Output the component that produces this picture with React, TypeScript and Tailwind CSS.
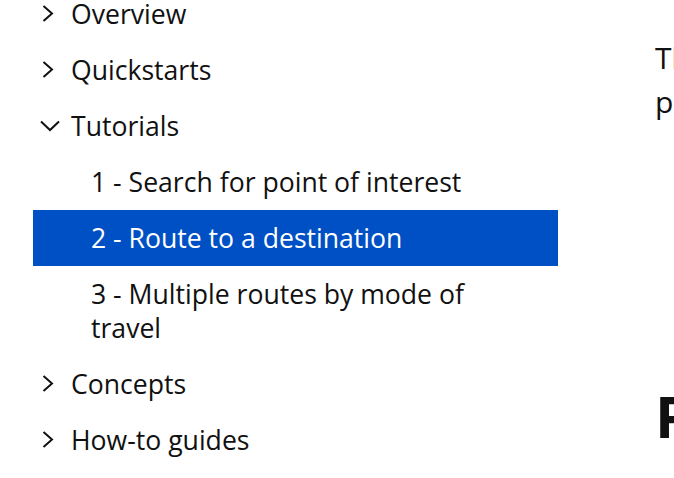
type NavItem = {
  label: string;
  expanded?: boolean;
  children?: { label: string; active?: boolean }[];
};

const nav: NavItem[] = [
  { label: 'Overview' },
  { label: 'Quickstarts' },
  {
    label: 'Tutorials',
    expanded: true,
    children: [
      { label: '1 - Search for point of interest' },
      { label: '2 - Route to a destination', active: true },
      { label: '3 - Multiple routes by mode of travel' },
    ],
  },
  { label: 'Concepts' },
  { label: 'How-to guides' },
];

const Chevron = ({ open }: { open?: boolean }) =>
  open ? (
    <svg className="ml-[7px]" width="20" height="12" viewBox="0 0 20 12" fill="none" stroke="currentColor" strokeWidth="2">
      <polyline points="1,1.5 10,10 19,1.5" />
    </svg>
  ) : (
    <svg className="ml-[9px]" width="12" height="18" viewBox="0 0 12 18" fill="none" stroke="currentColor" strokeWidth="2">
      <polyline points="1.5,1 10,8.5 1.5,16" />
    </svg>
  );

export default function App() {
  return (
    <div
      className="flex h-[478px] w-[674px] overflow-hidden bg-white text-[#111]"
      style={{ fontFamily: '"Open Sans", "Noto Sans", sans-serif' }}
    >
      {/* Table of contents */}
      <nav className="ml-[33px] mt-[-14px] w-[525px] shrink-0">
        <ul className="text-[26.6px] leading-[34px]">
          {nav.map((item) => (
            <li key={item.label}>
              <div className="flex items-center py-[11px]">
                <span className="flex w-[38px] items-center">
                  <Chevron open={item.expanded} />
                </span>
                <span>{item.label}</span>
              </div>
              {item.expanded && item.children && (
                <ul>
                  {item.children.map((child) => (
                    <li
                      key={child.label}
                      className={`py-[11px] pl-[58px] pr-[70px] ${
                        child.active ? 'bg-[#0050c5] text-white' : ''
                      }`}
                    >
                      {child.label}
                    </li>
                  ))}
                </ul>
              )}
            </li>
          ))}
        </ul>
      </nav>

      {/* Article */}
      <main className="ml-[97px] w-[600px] shrink-0 whitespace-nowrap">
        <p className="mt-[36px] text-[30px] leading-[44px]">
          This tutorial shows you how to calculate a route
          <br />
          plan and display it on the map.
        </p>
        <h2 className="mt-[263px] text-[58px] font-bold leading-none">Prerequisites</h2>
      </main>
    </div>
  );
}
